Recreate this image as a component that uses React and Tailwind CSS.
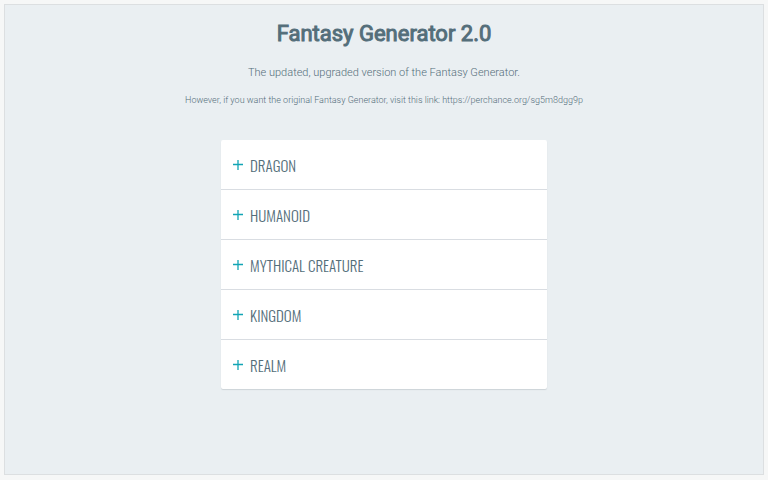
import { useState } from "react";

const sections = ["DRAGON", "HUMANOID", "MYTHICAL CREATURE", "KINGDOM", "REALM"];

function Section({ title }) {
  const [open, setOpen] = useState(false);

  return (
    <li className="border-b border-[#d9dde2] last:border-b-0">
      <button
        type="button"
        aria-expanded={open}
        onClick={() => setOpen(!open)}
        className="flex h-[49px] w-full cursor-pointer items-center gap-[7px] px-3 text-left"
      >
        <svg viewBox="0 0 10 10" className="h-[10px] w-[10px] shrink-0" aria-hidden="true">
          <path d={open ? "M0 4.5h10" : "M0 4.5h10M5 0v10"} stroke="#12a5b5" strokeWidth="1.3" />
        </svg>
        <span className="pt-px font-['Oswald','Roboto_Condensed','Open_Sans_Condensed','Liberation_Sans_Narrow',sans-serif] text-[15px] leading-6 font-light text-[#546e7a]">
          {title}
        </span>
      </button>
    </li>
  );
}

export default function App() {
  return (
    <div className="flex min-h-screen bg-[#f6f7f7] px-1 pt-1 pb-[5px] font-['Roboto',sans-serif] text-[#546e7a]">
      <main className="flex flex-1 flex-col items-center border border-[#dcdfe1] bg-[#eaeff2] pt-[15px]">
        <h1 className="text-[22px] leading-7 font-normal [-webkit-text-stroke:1px_#546e7a]">
          Fantasy Generator 2.0
        </h1>
        <p className="mt-4 text-[11px] leading-[18px] font-light">
          The updated, upgraded version of the Fantasy Generator.
        </p>
        <p className="mt-[10px] text-[9px] leading-4 font-light">
          However, if you want the original Fantasy Generator, visit this link: https://perchance.org/sg5m8dgg9p
        </p>
        <ul className="mt-8 w-[43%] rounded-xs bg-white shadow-[0_1px_1px_#cdd3d7]">
          {sections.map((title) => (
            <Section key={title} title={title} />
          ))}
        </ul>
      </main>
    </div>
  );
}
